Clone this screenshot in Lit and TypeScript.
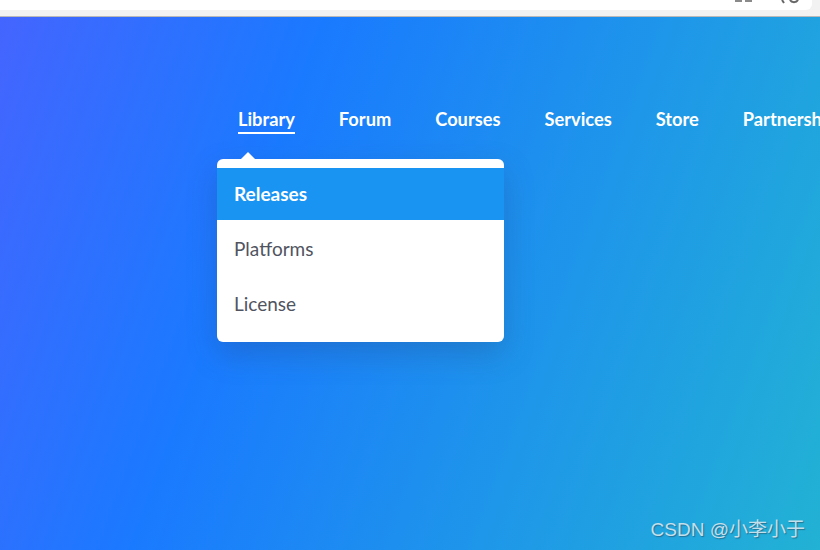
import { LitElement, html, css } from "lit";
import { customElement } from "lit/decorators.js";

const navItems = ["Library", "Forum", "Courses", "Services", "Store", "Partnership"];
const menuItems = ["Releases", "Platforms", "License"];

@customElement("app-root")
export class AppRoot extends LitElement {
  static styles = css`
    :host {
      display: block;
      width: 820px;
      height: 550px;
      overflow: hidden;
      position: relative;
      font-family: "Lato", "Noto Sans", sans-serif;
    }

    .chrome {
      height: 16px;
      background: #f2f2f2;
      border-bottom: 1px solid #b9b9b9;
      overflow: hidden;
    }

    .address {
      width: 812px;
      height: 10px;
      background: #fff;
      border-bottom-right-radius: 6px;
      display: flex;
      justify-content: flex-end;
      align-items: flex-start;
      gap: 27px;
      padding-right: 12px;
      box-sizing: border-box;
    }

    .address svg {
      display: block;
    }

    .stage {
      height: 533px;
      padding: 90px 0 0 217px;
      box-sizing: border-box;
      background: linear-gradient(110deg, #4465ff 0%, #1a7aff 32%, #22b2d4 100%);
    }

    .nav {
      display: flex;
      gap: 44px;
      padding: 0 0 0 21px;
      white-space: nowrap;
      list-style: none;
      margin: 0;
    }

    .nav a {
      display: block;
      color: #fff;
      font-size: 18.25px;
      font-weight: 700;
      line-height: 24px;
      padding-bottom: 1px;
      border-bottom: 2px solid transparent;
    }

    .nav a.active {
      border-bottom-color: #fff;
    }

    .menu {
      position: relative;
      width: 287px;
      margin-top: 25px;
      padding: 9px 0;
      background: #fff;
      border-radius: 6px;
      box-shadow: 0 12px 30px rgba(40, 70, 120, 0.28);
    }

    .menu::before {
      content: "";
      position: absolute;
      left: 24px;
      top: -7px;
      border-left: 7px solid transparent;
      border-right: 7px solid transparent;
      border-bottom: 7px solid #fff;
    }

    .menu div {
      height: 55px;
      line-height: 52px;
      padding-left: 17px;
      font-size: 19px;
      color: #50545f;
    }

    .menu div.active {
      height: 52px;
      margin-bottom: 3px;
      background: #1a94f2;
      color: #fff;
      font-weight: 700;
    }

    .mark {
      position: absolute;
      right: 15px;
      bottom: 8px;
      font-family: "Liberation Sans", "Noto Sans CJK SC", sans-serif;
      font-size: 19px;
      line-height: 24px;
      color: #c4dfea;
      text-shadow: 1px 1px 1px rgba(40, 70, 90, 0.55);
    }
  `;

  render() {
    return html`
      <div class="chrome">
        <div class="address">
          <svg width="18" height="2" viewBox="0 0 18 2" fill="#8a8a8a">
            <path d="M0 0h7v2H0zM10 0h7v2h-7z" />
          </svg>
          <svg width="20" height="5" viewBox="0 0 20 5" fill="none" stroke="#666" stroke-width="2">
            <path d="M2 0l2 3M10 0a4.5 4 0 0 0 8 0" />
          </svg>
        </div>
      </div>
      <div class="stage">
        <ul class="nav">
          ${navItems.map(
            (item, i) => html`<li><a class=${i === 0 ? "active" : ""}>${item}</a></li>`
          )}
        </ul>
        <div class="menu">
          ${menuItems.map(
            (item, i) => html`<div class=${i === 0 ? "active" : ""}>${item}</div>`
          )}
        </div>
      </div>
      <div class="mark">CSDN @小李小于</div>
    `;
  }
}
